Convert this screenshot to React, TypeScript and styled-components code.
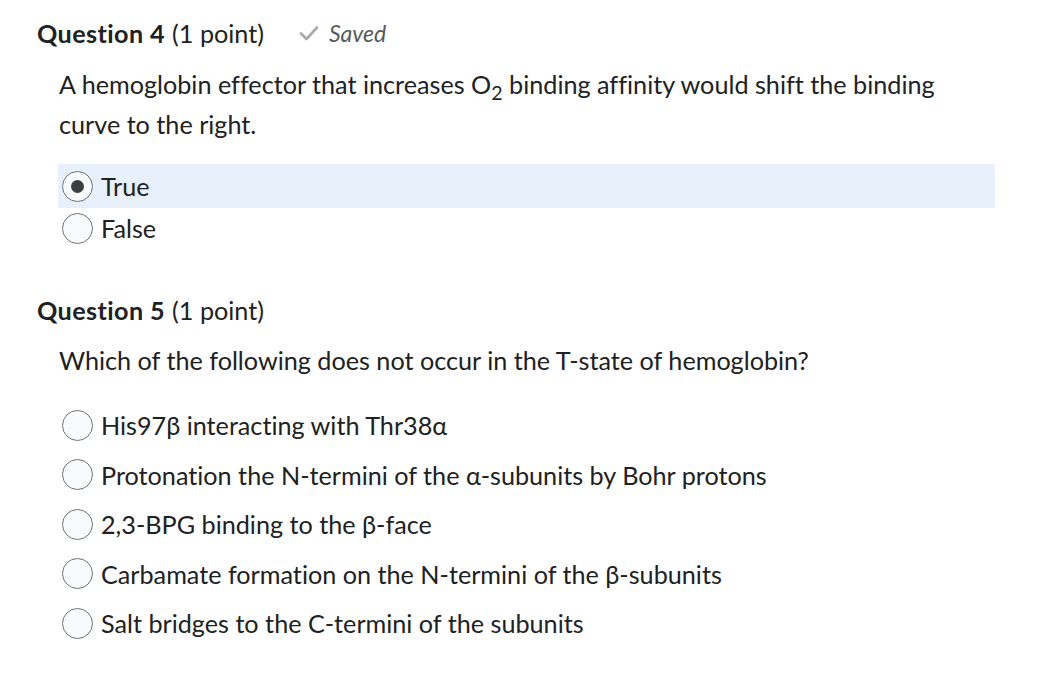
import React from "react";
import styled, { createGlobalStyle } from "styled-components";

const GlobalStyle = createGlobalStyle`
  html, body { margin: 0; padding: 0; background: #ffffff; }
  body {
    font-family: Lato, "Open Sans", "Liberation Sans", sans-serif;
    color: #202122;
    font-variant-ligatures: none;
  }
`;

const Page = styled.div`
  padding: 18px 42px 40px 37px;
  display: flex;
  flex-direction: column;
  gap: 46px;
`;

const QuestionBlock = styled.section`
  display: flex;
  flex-direction: column;
`;

const Header = styled.div`
  display: flex;
  align-items: center;
  height: 30px;
  font-size: 25.2px;
  line-height: 30px;
`;

const Title = styled.span`
  font-weight: 700;
  letter-spacing: 0.4px;
`;

const Points = styled.span`
  font-weight: 400;
  margin-left: 7px;
`;

const SavedBadge = styled.span`
  display: inline-flex;
  align-items: center;
  gap: 10px;
  margin-left: 35px;
  font-style: italic;
  font-size: 23px;
  color: #565a5c;
`;

const Body = styled.div<{ $gapTop: number; $gapBelow: number }>`
  margin: ${(p) => p.$gapTop}px 0 ${(p) => p.$gapBelow}px 22px;
  font-size: 25.2px;
  line-height: 40px;
  max-width: 925px;
`;

const Sub = styled.sub`
  font-size: 0.78em;
  line-height: 0;
  vertical-align: -0.3em;
`;

const OptionList = styled.div<{ $gap: number }>`
  margin-left: 21px;
  display: flex;
  flex-direction: column;
  gap: ${(p) => p.$gap}px;
`;

const OptionRow = styled.label<{ $selected?: boolean }>`
  display: flex;
  align-items: center;
  gap: 8px;
  height: 42px;
  padding-left: 4px;
  font-size: 25.2px;
  background: ${(p) => (p.$selected ? "#e8f1fb" : "transparent")};
  box-shadow: ${(p) => (p.$selected ? "0 -1px 0 #e8f1fb, 0 1px 0 #e8f1fb" : "none")};
`;

const Radio = styled.span<{ $checked?: boolean }>`
  box-sizing: border-box;
  width: 31px;
  height: 31px;
  border-radius: 50%;
  border: 1px solid #6e7376;
  background: #f9fafc;
  display: flex;
  align-items: center;
  justify-content: center;
  flex: none;
  &::after {
    content: "";
    display: ${(p) => (p.$checked ? "block" : "none")};
    width: 13px;
    height: 13px;
    border-radius: 50%;
    background: #3b3e40;
  }
`;

const Check = () => (
  <svg width="20" height="16" viewBox="0 0 20 16" aria-hidden>
    <polyline points="2,8.5 7.5,14 18,2.5" fill="none" stroke="#a7a9ab" strokeWidth="2.6" strokeLinecap="round" strokeLinejoin="round" />
  </svg>
);

const q5Options = [
  "His97β interacting with Thr38α",
  "Protonation the N-termini of the α-subunits by Bohr protons",
  "2,3-BPG binding to the β-face",
  "Carbamate formation on the N-termini of the β-subunits",
  "Salt bridges to the C-termini of the subunits",
];

export default function App() {
  return (
    <>
      <GlobalStyle />
      <Page>
        <QuestionBlock>
          <Header>
            <Title>Question 4</Title>
            <Points>(1 point)</Points>
            <SavedBadge>
              <Check />
              Saved
            </SavedBadge>
          </Header>
          <Body $gapTop={16} $gapBelow={21}>
            A hemoglobin effector that increases O<Sub>2</Sub> binding affinity would shift the binding curve to the right.
          </Body>
          <OptionList $gap={0}>
            <OptionRow $selected>
              <Radio $checked />
              True
            </OptionRow>
            <OptionRow>
              <Radio />
              False
            </OptionRow>
          </OptionList>
        </QuestionBlock>
        <QuestionBlock>
          <Header>
            <Title>Question 5</Title>
            <Points>(1 point)</Points>
          </Header>
          <Body $gapTop={15} $gapBelow={24}>
            Which of the following does not occur in the T-state of hemoglobin?
          </Body>
          <OptionList $gap={7.5}>
            {q5Options.map((o) => (
              <OptionRow key={o}>
                <Radio />
                {o}
              </OptionRow>
            ))}
          </OptionList>
        </QuestionBlock>
      </Page>
    </>
  );
}
